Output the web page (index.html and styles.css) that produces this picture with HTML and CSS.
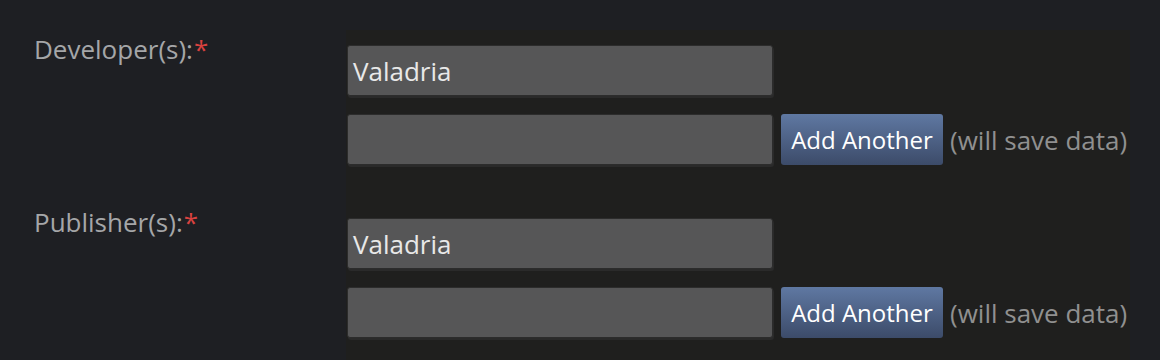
FILE: index.html
```html
<!DOCTYPE html>
<html>
<head>
<meta charset="utf-8">
<link rel="stylesheet" href="styles.css">
</head>
<body>
<div class="form">
  <div class="label">Developer(s):<span class="req">*</span></div>
  <div class="field">
    <div class="line"><div class="input">Valadria</div></div>
    <div class="line"><div class="input"></div><button class="btn">Add Another</button><span class="note">(will save data)</span></div>
  </div>
  <div class="label">Publisher(s):<span class="req">*</span></div>
  <div class="field">
    <div class="line"><div class="input">Valadria</div></div>
    <div class="line"><div class="input"></div><button class="btn">Add Another</button><span class="note">(will save data)</span></div>
  </div>
</div>
</body>
</html>
```
FILE: styles.css
```css
html, body {
  margin: 0;
  padding: 0;
  background: #1e1f23;
  height: 100%;
}
body {
  font-family: "Open Sans", "Liberation Sans", sans-serif;
  font-size: 26px;
  overflow: hidden;
}
.form {
  display: grid;
  grid-template-columns: 346px 784px;
  padding-top: 30px;
}
.label {
  padding: 4px 0 0 34px;
  color: #a5a6a8;
  line-height: 30px;
}
.req {
  color: #d9423f;
  margin-left: 1px;
}
.field {
  background: #1f1f1e;
  padding: 15px 0 38px 1px;
  display: flex;
  flex-direction: column;
  gap: 18px;
}
.line {
  display: flex;
  align-items: center;
  height: 51px;
}
.input {
  box-sizing: border-box;
  width: 426px;
  height: 51px;
  background: #565657;
  border: 1px solid #2c2c2c;
  border-radius: 3px;
  box-shadow: 1px 2px 0 #2a2a2a;
  color: #e8e8e8;
  padding-left: 5px;
  display: flex;
  align-items: center;
  line-height: 1;
}
.btn {
  box-sizing: border-box;
  margin-left: 8px;
  width: 162px;
  height: 51px;
  border: none;
  border-radius: 3px;
  background: linear-gradient(to bottom, #5f78a2, #3c4b69);
  color: #ffffff;
  font-family: inherit;
  font-size: 24px;
  padding: 0;
}
.note {
  margin-left: 7px;
  color: #909090;
}
```
